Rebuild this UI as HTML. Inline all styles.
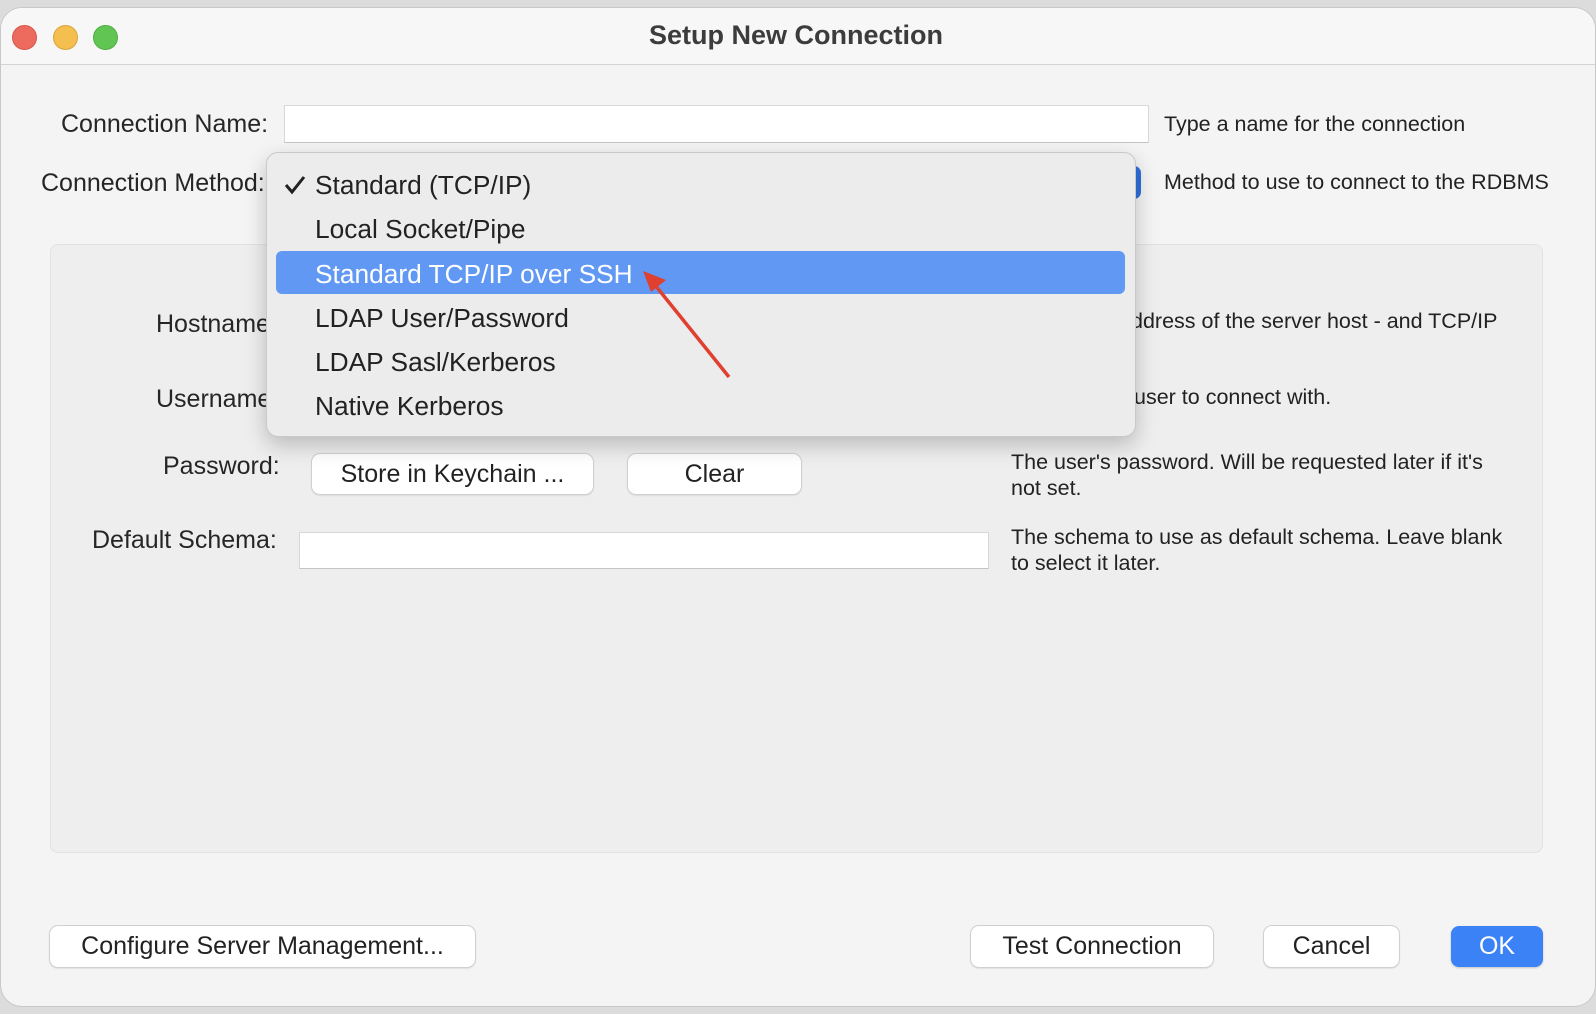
<!DOCTYPE html>
<html><head><meta charset="utf-8"><style>
*{margin:0;padding:0;box-sizing:border-box}
body{width:1596px;height:1014px;background:#dcdcdc;font-family:"Liberation Sans",sans-serif;color:#222;position:relative;overflow:hidden}
.win{position:absolute;left:0;top:7px;width:1596px;height:1000px;background:#f4f4f4;border-radius:22px;overflow:hidden;border:1px solid #c8c8c8}
.tb{position:absolute;left:0;top:0;width:100%;height:57px;background:#f7f7f7;border-bottom:1px solid #d4d4d4}
.dot{position:absolute;top:17px;width:25px;height:25px;border-radius:50%}
.t{position:absolute;white-space:nowrap}
.lbl{font-size:25px;color:#262626;line-height:30px}
.desc{font-size:21.5px;color:#222;line-height:26px}
.inp{position:absolute;background:#fff;border:1px solid #d8d8d8;border-bottom-color:#c4c4c4}
.btn{position:absolute;background:#fff;border-radius:8px;box-shadow:0 0 0 1px #d0d0d0,0 1px 2px rgba(0,0,0,.2);font-size:25px;text-align:center;color:#222}
.menu{position:absolute;left:266px;top:152px;width:870px;height:285px;background:#ececec;border:1px solid #c9c9c9;border-radius:12px;box-shadow:0 8px 22px rgba(0,0,0,.22)}
.mi{position:absolute;left:48px;font-size:26.3px;line-height:30px;color:#222;white-space:nowrap}
</style></head><body>
<div class="win">
 <div class="tb">
  <div class="dot" style="left:11px;background:#ed6a5e;border:1px solid #d6574c"></div>
  <div class="dot" style="left:52px;background:#f5bf4f;border:1px solid #d9a53c"></div>
  <div class="dot" style="left:92px;background:#61c554;border:1px solid #4fae43"></div>
  <div class="t" style="left:0;width:1590px;text-align:center;top:12px;font-size:27px;font-weight:bold;color:#3c3c3c">Setup New Connection</div>
 </div>
</div>
<div class="t lbl" style="left:61px;top:109px">Connection Name:</div>
<div class="inp" style="left:284px;top:105px;width:865px;height:38px"></div>
<div class="t desc" style="left:1164px;top:111px">Type a name for the connection</div>
<div class="t lbl" style="left:41px;top:168px">Connection Method:</div>
<div style="position:absolute;left:1118px;top:166px;width:23px;height:33px;background:#2f6fdc;border-radius:7px"></div>
<div class="t desc" style="left:1164px;top:169px">Method to use to connect to the RDBMS</div>
<div style="position:absolute;left:50px;top:244px;width:1493px;height:609px;background:#eeeeee;border:1px solid #e2e2e2;border-radius:8px"></div>
<div class="t lbl" style="left:156px;top:309px">Hostname</div>
<div class="t lbl" style="left:156px;top:384px">Username</div>
<div class="t desc" style="left:1131px;top:308px">ddress of the server host - and TCP/IP</div>
<div class="t desc" style="left:1134px;top:384px">user to connect with.</div>
<div class="t lbl" style="left:163px;top:451px">Password:</div>
<div class="btn" style="left:312px;top:454px;width:281px;height:40px;line-height:40px">Store in Keychain ...</div>
<div class="btn" style="left:628px;top:454px;width:173px;height:40px;line-height:40px">Clear</div>
<div class="t desc" style="left:1011px;top:450px;line-height:25.5px">The user's password. Will be requested later if it's<br>not set.</div>
<div class="t lbl" style="left:92px;top:525px">Default Schema:</div>
<div class="inp" style="left:299px;top:532px;width:690px;height:37px"></div>
<div class="t desc" style="left:1011px;top:525px;line-height:25.5px">The schema to use as default schema. Leave blank<br>to select it later.</div>
<div class="btn" style="left:50px;top:926px;width:425px;height:41px;line-height:41px">Configure Server Management...</div>
<div class="btn" style="left:971px;top:926px;width:242px;height:41px;line-height:41px">Test Connection</div>
<div class="btn" style="left:1264px;top:926px;width:135px;height:41px;line-height:41px">Cancel</div>
<div class="btn" style="left:1451px;top:926px;width:92px;height:41px;line-height:41px;background:#3a82f6;color:#fff;box-shadow:0 1px 2px rgba(0,0,0,.2)">OK</div>
<div class="menu">
 <svg style="position:absolute;left:17px;top:22px" width="22" height="20"><path d="M2 10 L8 17 L20 2" fill="none" stroke="#222" stroke-width="3"/></svg>
 <div class="mi" style="top:17px">Standard (TCP/IP)</div>
 <div class="mi" style="top:61px">Local Socket/Pipe</div>
 <div style="position:absolute;left:9px;top:98px;width:849px;height:43px;background:#6198f4;border-radius:6px"></div>
 <div class="mi" style="top:106px;color:#fff">Standard TCP/IP over SSH</div>
 <div class="mi" style="top:150px">LDAP User/Password</div>
 <div class="mi" style="top:194px">LDAP Sasl/Kerberos</div>
 <div class="mi" style="top:238px">Native Kerberos</div>
</div>
<svg style="position:absolute;left:0;top:0" width="1596" height="1014">
 <line x1="729" y1="377" x2="655" y2="285" stroke="#e0402f" stroke-width="3.5"/>
 <polygon points="643,271 666,280 651,292" fill="#e0402f"/>
</svg>
</body></html>
